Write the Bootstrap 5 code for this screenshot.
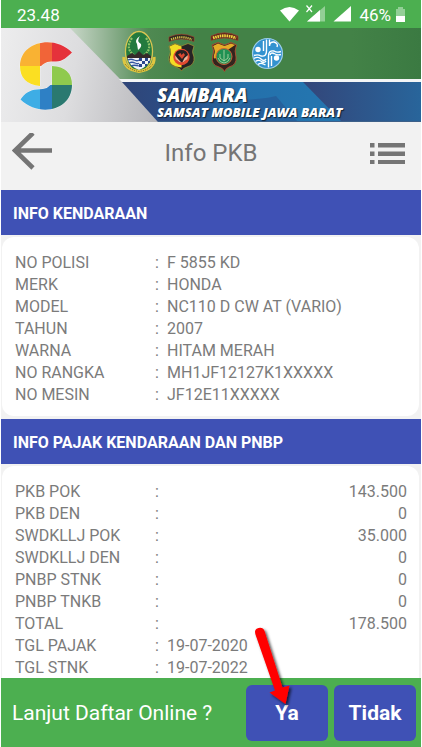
<!DOCTYPE html>
<html lang="id">
<head>
<meta charset="utf-8">
<meta name="viewport" content="width=device-width, initial-scale=1">
<title>Info PKB</title>
<link href="https://cdn.jsdelivr.net/npm/bootstrap@5.3.0/dist/css/bootstrap.min.css" rel="stylesheet">
<style>
  body { font-family: Roboto, "Liberation Sans", sans-serif; font-size: 16px; line-height: 22px; color: #7b7b7b; background: #f2f2f2; }
  .screen { border: solid #fff; border-width: 0 1px; }
  .bg-leaf { background: #4caf50; }
  .status-bar { height: 28px; font-size: 17px; padding: 2px 15px 0 16px; }
  .banner { height: 94px; padding-left: 156px; padding-bottom: 2px; }
  .banner-art { position: absolute; inset: 0; width: 100%; height: 100%; }
  .brand { position: relative; font-family: "Open Sans", sans-serif; font-style: italic; font-weight: 800; color: #fff; text-shadow: 1px 1px 1px #123; }
  .brand-name { font-size: 19px; line-height: 18px; }
  .brand-sub { font-size: 13px; line-height: 16px; }
  .title-bar { height: 68px; padding: 0 15px 6px 11px; }
  .page-title { font-size: 24px; font-weight: 400; color: #757575; }
  .section-title { height: 45px; padding: 2px 12px 0; font-size: 16px; font-weight: 700; color: #fff; background: #3f51b5; }
  .info-card { border-radius: 12px; margin: 2px 2px 3px 1px; padding: 15px 12px 10px 13px; }
  .info-table { color: inherit; }
  .info-table th { width: 140px; font-weight: 400; }
  .info-table td.sep { width: 12px; }
  .info-table th, .info-table td { padding: 0; }
  .action-bar { padding: 7px 5px 6px 11px; gap: 6px; font-size: 21px; color: #fff; }
  .btn-act { width: 82px; height: 56px; border-radius: 6px; font-size: 21px; font-weight: 700; color: #fff; background: #3f51b5; padding: 2px 0 0; }
  .btn-act:hover { color: #fff; background: #35459e; }
  .pointer { position: absolute; left: 4px; bottom: 31px; pointer-events: none; }
</style>
<script src="https://cdn.jsdelivr.net/npm/bootstrap@5.3.0/dist/js/bootstrap.bundle.min.js"></script>
</head>
<body>
<div class="screen d-flex flex-column vh-100 overflow-hidden">
  <div class="status-bar bg-leaf text-white d-flex align-items-center flex-shrink-0">
    <span class="me-auto">23.48</span>
    <svg width="74" height="22" viewBox="277 4 74 22" aria-hidden="true">
      <path d="M280 10.500Q289.500 3.500 299 10.500L289.500 21.500Z" fill="#fff"/>
      <path d="M307 21.500L325 6V21.500Z" fill="#fff" opacity=".4"/>
      <path d="M307 21.500L320 10V21.500Z" fill="#fff"/>
      <path d="M306.500 5.500L312 12M312 5.500L306.500 12" stroke="#fff" stroke-width="1.200"/>
      <path d="M333.500 21.500L351 6V21.500Z" fill="#fff"/>
    </svg>
    <span class="ms-2">46%</span>
    <svg class="ms-1" width="11" height="18" viewBox="395 5 11 18" aria-hidden="true">
      <path d="M398 6h5v2h2v7h-9V8h2z" fill="#fff" opacity=".4"/><path d="M396 15h9v6h-9z" fill="#fff"/>
    </svg>
  </div>

  <header class="banner position-relative d-flex flex-column justify-content-end flex-shrink-0 overflow-hidden">
    <svg class="banner-art" viewBox="1 28 420 94" preserveAspectRatio="xMinYMin slice" aria-hidden="true">
      <defs>
        <linearGradient id="silver" x2="1" y2=".1"><stop stop-color="#ededee"/><stop offset=".45" stop-color="#dddddf"/><stop offset="1" stop-color="#b3b3b7"/></linearGradient>
        <linearGradient id="green" gradientUnits="userSpaceOnUse" x1="72" x2="421"><stop stop-color="#c5d5c5"/><stop offset=".09" stop-color="#97b698"/><stop offset=".22" stop-color="#4f8952"/><stop offset=".36" stop-color="#438247"/><stop offset=".8" stop-color="#438247"/><stop offset="1" stop-color="#3b7a42"/></linearGradient>
        <linearGradient id="navy" gradientUnits="userSpaceOnUse" x1="121" x2="310"><stop stop-color="#304578"/><stop offset=".35" stop-color="#294f88"/><stop offset=".65" stop-color="#2470ab"/><stop offset="1" stop-color="#2475af"/></linearGradient>
        <linearGradient id="dusk" gradientUnits="userSpaceOnUse" x1="304" x2="421"><stop stop-color="#33467a"/><stop offset="1" stop-color="#28659b"/></linearGradient>
        <clipPath id="sTop"><path d="M40 86Q20 84 20 66C20 42 54 34 72 52.500C67 57 63 61.500 56 61.500H51Q43 62 40 68Z"/></clipPath>
        <clipPath id="sLow"><path d="M52 66Q72 67 72 85C72 110 40 118 20.500 99.500C25 93 30 90 37 89.500Q50 89.500 52 82Z"/></clipPath>
      </defs>
      <path d="M0 28H180V122H0Z" fill="url(#silver)"/>
      <path d="M70 28H422V79H120Z" fill="url(#green)"/>
      <path d="M119 79H422V82H122Z" fill="#f3f5f6"/>
      <path d="M122 82H422V122H158Z" fill="url(#navy)"/>
      <path d="M303 82H422V122H342Z" fill="url(#dusk)"/>
      <path d="M220 122L246 100L275 97L296 122ZM258 122V100L276 96L298 122Z" fill="#255b97" opacity=".75"/>
      <path d="M158 121.500H422" stroke="#3d6089"/>
      <g stroke="#fff" stroke-opacity=".45" stroke-width="1" fill="none"><path d="M40 86Q20 84 20 66C20 42 54 34 72 52.500C67 57 63 61.500 56 61.500H51Q43 62 40 68Z"/><path d="M52 66Q72 67 72 85C72 110 40 118 20.500 99.500C25 93 30 90 37 89.500Q50 89.500 52 82Z"/></g>
      <g clip-path="url(#sTop)"><path d="M18 38h22v28H18z" fill="#f9b233"/><path d="M40 38h12v28H40z" fill="#f16438"/><path d="M52 38h22v28H52z" fill="#e5323b"/><path d="M18 66h22v22H18z" fill="#fbdf22"/></g>
      <g clip-path="url(#sLow)"><path d="M52 64h22v21H52z" fill="#8fca4d"/><path d="M52 85h22v28H52z" fill="#2a7970"/><path d="M40 85h12v28H40z" fill="#2e80c5"/><path d="M18 85h22v28H18z" fill="#3eade5"/></g>

      <!-- West Java province -->
      <ellipse cx="139" cy="51.500" rx="13.500" ry="20" fill="#237a3e" stroke="#d8c552" stroke-width="1.300"/>
      <path d="M132 38C127 45 128 51 134 55M146 38C151 45 150 51 144 55" fill="none" stroke="#8fc269" stroke-width="2.200" stroke-dasharray="2 1"/>
      <path d="M140 36Q136 41 141 44Q142 47 138 50L137 44Q134 40 140 36Z" fill="#fff"/>
      <path d="M127 56L132 53L135 55L139 51L143 55L147 53L151 56V59H127Z" fill="#352b29"/>
      <path d="M127.500 58H150.500Q149 66 139 70Q129 66 127.500 58Z" fill="#f2f5f7"/>
      <path d="M128 60Q131 58.500 134 60T139 60M129 63Q132 61.500 135 63T139 63M131 66Q134 64.500 139 66" fill="none" stroke="#3457a1" stroke-width="1.300"/>
      <path d="M139 58h3v3h-3zM145 58h3v3h-3zM142 61h3v3h-3zM148 61h2v2h-2zM139 64h3v3h-3zM145 64h2v2h-2z" fill="#29468c"/>
      <path d="M124 57Q123 69 139 71.500Q155 69 154 57" fill="none" stroke="#dfc640" stroke-width="3.200"/>
      <path d="M125 64Q130 70 139 71.500Q149 70 153 64" fill="none" stroke="#5b5124" stroke-width=".8" stroke-dasharray="1.200 1"/>

      <!-- Regional police, Jawa Barat -->
      <path d="M169 41.500V37Q181.500 31.500 194 37V41.500Q181.500 36.500 169 41.500Z" fill="#2d2920" stroke="#a83b2a" stroke-width=".6"/>
      <path d="M171 39.500Q181.500 35 192 39.500" fill="none" stroke="#d5be49" stroke-width="2.200" stroke-dasharray="1.300 .8"/>
      <path d="M169 46L175 43.500L181.500 46L188 43.500L194 46Q191 52 194 57Q195 65 187 67Q183 68 181.500 71Q180 68 176 67Q168 65 169 57Q172 52 169 46Z" fill="#272425" stroke="#a89435" stroke-width=".7"/>
      <path d="M169.500 46.500L175 44L181.500 46.500V67.500L176 66.500Q168 64 170 57Q172 52 169.500 46.500Z" fill="#f3dd25"/>
      <circle cx="181.500" cy="57" r="8.200" fill="#e6492e"/><circle cx="181.500" cy="57" r="6.200" fill="#ebb79c"/>
      <path d="M175 55Q176 50 181.500 50T188 55L184.500 58L182 63L178 59Z" fill="#292123"/>
      <path d="M178 54.500L180.500 53L181.500 55L183.500 53L185 55L182 59Z" fill="#d94731"/>
      <path d="M176 60Q181 66 187 60" fill="none" stroke="#d94731" stroke-width="1.400"/>

      <!-- Regional police, Metro Jaya -->
      <path d="M211 40.500V36Q224.500 29.500 238 36V40.500Q224.500 35.500 211 40.500Z" fill="#5d251d" stroke="#a33d2c" stroke-width=".6"/>
      <path d="M213 38Q224.500 33.500 236 38" fill="none" stroke="#f1d53e" stroke-width="2.800" stroke-dasharray="1.600 .7"/>
      <path d="M212 45L218 42.500L224.500 45L231 42.500L236.500 45Q234 51 236 57Q237 65 229 67Q226 68 224.500 71.500Q223 68 219 67Q211 65 212.500 57Q215 51 212 45Z" fill="#33251e" stroke="#b04b30" stroke-width=".9"/>
      <path d="M213 46L218 43.500L224.500 46L231 43.500L235 45L216 58Q213 60 214 55Q216 51 213 46Z" fill="#e5ac28"/>
      <circle cx="224" cy="56.500" r="8" fill="#1f9153" stroke="#c96038"/>
      <path d="M224 50V61M220 54V58L224 61L228 58V54M218 58Q220 63 224 63T230 58" fill="none" stroke="#a9d3a0" stroke-width=".9"/>

      <!-- Jasa Raharja -->
      <circle cx="267.500" cy="53.500" r="15" fill="#3292d0" stroke="#9ccde9" stroke-width="1.200"/>
      <g fill="none" stroke="#fff" stroke-width="1.400">
        <path d="M266.500 39.500V51Q266.500 57 261 56Q258 54 254 55.500M263.500 41V51"/>
        <path d="M268.500 67.500V56Q268.500 50 274 51Q277 53 281 51.500M271.500 66V56"/>
        <path d="M269.500 39.500V46Q270 41.500 274 42Q278.500 43.500 277 47"/>
        <path d="M254 58.500Q258 56 261 59Q264 62 266 59M255.500 61.500Q259 59 262 62Q265 63 266 61M258 64.500Q261 62 265.500 65"/>
        <path d="M281 54.500Q277 55.500 274 53.500Q271 52 270 55"/>
      </g>
      <circle cx="258" cy="49.500" r="2.700" fill="#fff"/><circle cx="276.500" cy="58" r="2.700" fill="#fff"/>
    </svg>
    <div class="brand brand-name">SAMBARA</div>
    <div class="brand brand-sub text-nowrap">SAMSAT MOBILE JAWA BARAT</div>
  </header>

  <nav class="title-bar d-flex align-items-center justify-content-between flex-shrink-0" aria-label="Halaman">
    <button type="button" class="btn p-0 border-0 lh-1" aria-label="Kembali">
      <svg width="40" height="40" viewBox="13 133 40 40" fill="none" stroke="#757575" stroke-width="4.600" aria-hidden="true"><path d="M34 133L16 150.500L34 168M16 150.500H53"/></svg>
    </button>
    <h1 class="page-title m-0">Info PKB</h1>
    <button type="button" class="btn p-0 border-0 lh-1" aria-label="Menu">
      <svg width="36" height="22" viewBox="370 142 36 22" fill="#757575" aria-hidden="true"><path d="M370 143h4.500v4.500H370zM378 143h27v4.500h-27zM370 151.500h4.500v4.500H370zM378 151.500h27v4.500h-27zM370 160h4.500v4H370zM378 160h27v4h-27z"/></svg>
    </button>
  </nav>

  <main class="flex-grow-1 overflow-hidden">
    <h2 class="section-title m-0 d-flex align-items-center">INFO KENDARAAN</h2>
    <div class="info-card bg-white">
      <table class="info-table w-100">
        <tbody>
          <tr><th scope="row">NO POLISI</th><td class="sep">:</td><td>F 5855 KD</td></tr>
          <tr><th scope="row">MERK</th><td class="sep">:</td><td>HONDA</td></tr>
          <tr><th scope="row">MODEL</th><td class="sep">:</td><td>NC110 D CW AT (VARIO)</td></tr>
          <tr><th scope="row">TAHUN</th><td class="sep">:</td><td>2007</td></tr>
          <tr><th scope="row">WARNA</th><td class="sep">:</td><td>HITAM MERAH</td></tr>
          <tr><th scope="row">NO RANGKA</th><td class="sep">:</td><td>MH1JF12127K1XXXXX</td></tr>
          <tr><th scope="row">NO MESIN</th><td class="sep">:</td><td>JF12E11XXXXX</td></tr>
        </tbody>
      </table>
    </div>
    <h2 class="section-title m-0 d-flex align-items-center">INFO PAJAK KENDARAAN DAN PNBP</h2>
    <div class="info-card bg-white">
      <table class="info-table w-100">
        <tbody>
          <tr><th scope="row">PKB POK</th><td class="sep">:</td><td class="text-end">143.500</td></tr>
          <tr><th scope="row">PKB DEN</th><td class="sep">:</td><td class="text-end">0</td></tr>
          <tr><th scope="row">SWDKLLJ POK</th><td class="sep">:</td><td class="text-end">35.000</td></tr>
          <tr><th scope="row">SWDKLLJ DEN</th><td class="sep">:</td><td class="text-end">0</td></tr>
          <tr><th scope="row">PNBP STNK</th><td class="sep">:</td><td class="text-end">0</td></tr>
          <tr><th scope="row">PNBP TNKB</th><td class="sep">:</td><td class="text-end">0</td></tr>
          <tr><th scope="row">TOTAL</th><td class="sep">:</td><td class="text-end">178.500</td></tr>
          <tr><th scope="row">TGL PAJAK</th><td class="sep">:</td><td>19-07-2020</td></tr>
          <tr><th scope="row">TGL STNK</th><td class="sep">:</td><td>19-07-2022</td></tr>
        </tbody>
      </table>
    </div>
  </main>

  <footer class="action-bar bg-leaf d-flex align-items-center flex-shrink-0">
    <span class="me-auto text-nowrap">Lanjut Daftar Online ?</span>
    <div class="d-flex position-relative">
      <button type="button" class="btn btn-act border-0">Ya</button>
      <svg class="pointer" width="50" height="84" viewBox="250 626 50 84" aria-hidden="true">
        <defs><filter id="soft" x="-30%" y="-20%" width="170%" height="150%"><feDropShadow dx="2" dy="2" stdDeviation="1.500" flood-opacity=".7"/></filter></defs>
        <path d="M255.300 634Q254 629 258.500 628Q263 627 264.500 631L282.500 687.500L289.500 685.500L285.500 704L269.500 692.500L275 690.500Z" fill="#f00" filter="url(#soft)"/>
      </svg>
    </div>
    <button type="button" class="btn btn-act border-0">Tidak</button>
  </footer>
</div>
</body>
</html>
